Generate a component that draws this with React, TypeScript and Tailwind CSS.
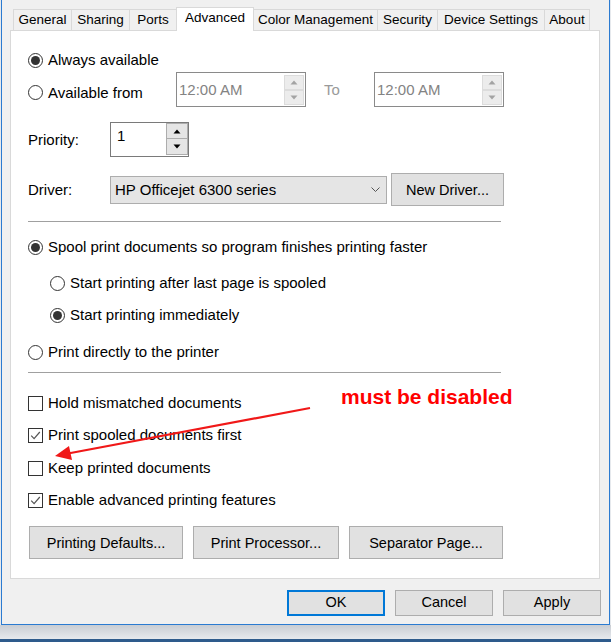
import React from "react";

function Radio({ checked }: { checked?: boolean }) {
  return (
    <span className="w-[15px] h-[15px] rounded-full border border-[#333333] bg-white flex items-center justify-center shrink-0">
      {checked && <span className="w-[9px] h-[9px] rounded-full bg-[#333333]" />}
    </span>
  );
}

function Check({ checked }: { checked?: boolean }) {
  return (
    <span className="w-[15px] h-[15px] border border-[#333333] bg-white flex items-center justify-center shrink-0">
      {checked && (
        <svg width="13" height="13" viewBox="0 0 13 13">
          <polyline points="2.2,6.6 5.1,9.6 10.8,3" fill="none" stroke="#555555" strokeWidth="1.2" />
        </svg>
      )}
    </span>
  );
}

function Arrow({ up, color }: { up?: boolean; color: string }) {
  return (
    <svg width="8" height="5" viewBox="0 0 8 5">
      {up ? <polygon points="0.5,4.5 7.5,4.5 4,0.5" fill={color} /> : <polygon points="0.5,0.5 7.5,0.5 4,4.5" fill={color} />}
    </svg>
  );
}

function TimeBox() {
  return (
    <div className="w-[130px] h-[35px] border border-[#8a8a8a] bg-white flex">
      <div className="flex-1 pl-[2px] flex items-center text-[#838383]">12:00 AM</div>
      <div className="w-[20px] mr-[1px] pt-[2px] pb-[1px] flex flex-col">
        <div className="h-[15px] bg-[#ececec] border border-[#dcdcdc] flex items-center justify-center">
          <Arrow up color="#a3a3a3" />
        </div>
        <div className="h-[15px] bg-[#ececec] border border-[#dcdcdc] flex items-center justify-center">
          <Arrow color="#a3a3a3" />
        </div>
      </div>
    </div>
  );
}

function Btn({ w, label, primary }: { w: string; label: string; primary?: boolean }) {
  return (
    <div
      className={
        primary
          ? `${w} h-full bg-[#e1e1e1] border-2 border-[#0078d7] flex items-center justify-center text-[14.5px] text-black`
          : `${w} h-full bg-[#e1e1e1] border border-[#adadad] flex items-center justify-center text-[14.5px] text-black`
      }
    >
      {label}
    </div>
  );
}

export default function App() {
  const tabs: { label: string; w: string; sel?: boolean; noLeft?: boolean; last?: boolean }[] = [
    { label: "General", w: "w-[58px]" },
    { label: "Sharing", w: "w-[58px]" },
    { label: "Ports", w: "w-[47px]" },
    { label: "Advanced", w: "w-[78px]", sel: true },
    { label: "Color Management", w: "w-[123px]", noLeft: true },
    { label: "Security", w: "w-[60px]" },
    { label: "Device Settings", w: "w-[107px]" },
    { label: "About", w: "w-[46px]", last: true },
  ];

  return (
    <div className="relative w-[611px] h-[642px] overflow-hidden bg-[#e6e9ed] font-['Liberation_Sans',Arial,sans-serif] text-[15px] text-black">
      <div className="ml-[1px] w-[609px] h-[625px] bg-[#f0f0f0] border-l border-r border-b border-[#2b7bd1] flex flex-col">
        {/* tabs */}
        <div className="pl-[11px] pt-[7px] h-[30px] flex items-end">
          {tabs.map((t) =>
            t.sel ? (
              <div
                key={t.label}
                className={`${t.w} h-[24px] -mb-[1px] relative z-10 bg-white border-l border-r border-t border-[#d9d9d9] flex items-center justify-center text-[13.5px] pb-[3px]`}
              >
                {t.label}
              </div>
            ) : (
              <div
                key={t.label}
                className={`${t.w} h-[21px] bg-[#f0f0f0] border-t ${t.noLeft ? "" : "border-l"} ${t.last ? "border-r" : ""} border-[#d9d9d9] flex items-center justify-center text-[13.5px]`}
              >
                {t.label}
              </div>
            )
          )}
        </div>

        {/* panel */}
        <div className="ml-[8px] w-[590px] h-[549px] bg-white border border-[#d9d9d9] pl-[17px] pt-[19px] flex flex-col leading-[20px]">
          <div className="h-[20px] flex items-center gap-[5px]">
            <Radio checked />
            <span>Always available</span>
          </div>

          <div className="mt-[2px] h-[35px] flex">
            <div className="w-[148px] flex items-center gap-[5px] pt-[6px]">
              <Radio />
              <span>Available from</span>
            </div>
            <TimeBox />
            <div className="w-[68px] pl-[18px] flex items-center text-[#9a9a9a]">To</div>
            <TimeBox />
          </div>

          <div className="mt-[15px] h-[35px] flex">
            <div className="w-[82px] flex items-center pt-[1px]">Priority:</div>
            <div className="w-[79px] h-[35px] border border-[#7a7a7a] bg-white flex">
              <div className="flex-1 pl-[6px] pt-[3px]">1</div>
              <div className="w-[22px] pb-[1px] flex flex-col">
                <div className="h-[16px] bg-[#e5e5e5] border border-[#adadad] flex items-center justify-center">
                  <Arrow up color="#000000" />
                </div>
                <div className="h-[16px] bg-[#e5e5e5] border border-[#adadad] border-t-0 flex items-center justify-center">
                  <Arrow color="#000000" />
                </div>
              </div>
            </div>
          </div>

          <div className="mt-[16px] h-[33px] flex items-center">
            <div className="w-[82px]">Driver:</div>
            <div className="w-[277px] h-[28px] bg-[#e5e5e5] border border-[#adadad] flex items-center pl-[4px] pr-[6px]">
              <span className="flex-1">HP Officejet 6300 series</span>
              <svg width="9" height="5" viewBox="0 0 9 5">
                <polyline points="0.5,0.5 4.5,4.5 8.5,0.5" fill="none" stroke="#555555" strokeWidth="1" />
              </svg>
            </div>
            <div className="ml-[4px] h-[33px]">
              <Btn w="w-[113px]" label="New Driver..." />
            </div>
          </div>

          <div className="mt-[15px] h-px w-[473px] bg-[#a0a0a0]" />

          <div className="mt-[15px] h-[20px] flex items-center gap-[5px]">
            <Radio checked />
            <span>Spool print documents so program finishes printing faster</span>
          </div>
          <div className="mt-[16px] h-[20px] flex items-center gap-[5px] pl-[22px]">
            <Radio />
            <span>Start printing after last page is spooled</span>
          </div>
          <div className="mt-[12px] h-[20px] flex items-center gap-[5px] pl-[22px]">
            <Radio checked />
            <span>Start printing immediately</span>
          </div>
          <div className="mt-[17px] h-[20px] flex items-center gap-[5px]">
            <Radio />
            <span>Print directly to the printer</span>
          </div>

          <div className="mt-[10px] h-px w-[473px] bg-[#a0a0a0]" />

          <div className="mt-[20px] h-[20px] flex items-center gap-[5px]">
            <Check />
            <span>Hold mismatched documents</span>
          </div>
          <div className="mt-[12px] h-[20px] flex items-center gap-[5px]">
            <Check checked />
            <span>Print spooled documents first</span>
          </div>
          <div className="mt-[13px] h-[20px] flex items-center gap-[5px]">
            <Check />
            <span>Keep printed documents</span>
          </div>
          <div className="mt-[12px] h-[20px] flex items-center gap-[5px]">
            <Check checked />
            <span>Enable advanced printing features</span>
          </div>

          <div className="mt-[16px] h-[33px] flex gap-[10px] ml-[1px]">
            <Btn w="w-[154px]" label="Printing Defaults..." />
            <Btn w="w-[146px]" label="Print Processor..." />
            <Btn w="w-[154px]" label="Separator Page..." />
          </div>
        </div>

        {/* bottom buttons */}
        <div className="mt-[11px] h-[26px] flex justify-end pr-[8px] gap-[10px]">
          <Btn w="w-[98px]" label="OK" primary />
          <Btn w="w-[98px]" label="Cancel" />
          <Btn w="w-[98px]" label="Apply" />
        </div>
      </div>
      <div className="h-[14px] bg-gradient-to-b from-[#c9cdd3] to-[#e6e9ed]" />
      <div className="h-[3px] bg-[#2e5b8c]" />

      {/* annotation overlay */}
      <div className="absolute left-[341px] top-[386px] text-[21px] leading-none font-bold text-[#ff0000] whitespace-nowrap">
        must be disabled
      </div>
      <svg className="absolute left-0 top-0 pointer-events-none" width="611" height="642" viewBox="0 0 611 642">
        <line x1="310" y1="408" x2="68" y2="453.5" stroke="#f01818" strokeWidth="2.2" />
        <polygon points="55,456 69,446 72,460" fill="#f01818" />
      </svg>
    </div>
  );
}
